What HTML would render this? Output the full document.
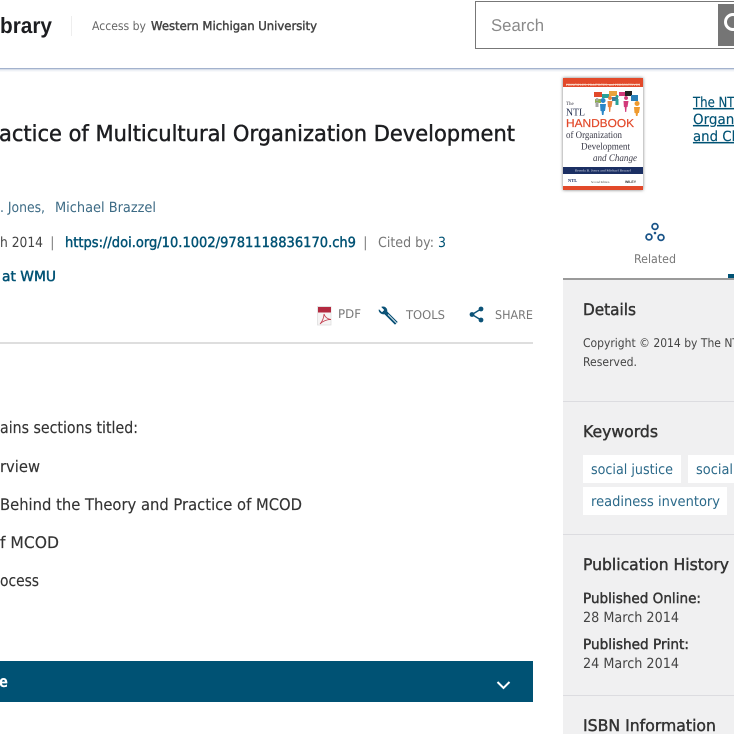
<!DOCTYPE html>
<html><head><meta charset="utf-8"><title>Theory and Practice of Multicultural Organization Development</title>
<style>
html,body{margin:0;padding:0;width:734px;height:734px;overflow:hidden;background:#fff}
svg{display:block}
text{font-family:"DejaVu Sans","Liberation Sans",sans-serif;text-rendering:geometricPrecision;white-space:pre}
.s{stroke-width:.45px}
.r{stroke-width:.15px}
</style></head><body>
<svg width="734" height="734" viewBox="0 0 734 734" xmlns="http://www.w3.org/2000/svg">
<defs><filter id="b" x="-20%" y="-20%" width="140%" height="140%"><feGaussianBlur stdDeviation="1.5"/></filter></defs>

<!-- header -->
<text x="0" y="33" font-size="22" font-weight="700" fill="#1c1d20" textLength="52" lengthAdjust="spacingAndGlyphs" style="font-family:'Liberation Sans',sans-serif">brary</text>
<rect x="71" y="16" width="1" height="20" fill="#eeeeee"/>
<text x="92" y="30" font-size="12" fill="#666" textLength="54" lengthAdjust="spacingAndGlyphs">Access by</text>
<text x="151" y="30" font-size="12" fill="#444" class="s" stroke="#444" textLength="166" lengthAdjust="spacingAndGlyphs">Western Michigan University</text>
<rect x="0" y="68" width="734" height="1.4" fill="#a3b2cd"/>
<rect x="0" y="69.4" width="734" height="2" fill="#eef1f6"/>

<!-- search -->
<rect x="475.5" y="1.5" width="270" height="47" fill="#fff" stroke="#777"/>
<text x="491" y="31" font-size="17" fill="#8a8a8a" textLength="53" lengthAdjust="spacingAndGlyphs" style="font-family:'Liberation Sans',sans-serif">Search</text>
<rect x="718" y="4" width="16" height="42" fill="#757575"/>
<circle cx="733" cy="22" r="7.500" fill="none" stroke="#fff" stroke-width="3"/>

<!-- title -->
<text x="-1" y="141" font-size="22" fill="#1c1d20" class="s" stroke="#1c1d20" textLength="516" lengthAdjust="spacingAndGlyphs">actice of Multicultural Organization Development</text>

<!-- meta -->
<text x="0" y="212" font-size="14" fill="#3d6b85" textLength="45" lengthAdjust="spacingAndGlyphs">. Jones,</text>
<text x="55" y="212" font-size="14" fill="#3d6b85" textLength="101" lengthAdjust="spacingAndGlyphs">Michael Brazzel</text>
<text x="0" y="247" font-size="14" fill="#444" textLength="43" lengthAdjust="spacingAndGlyphs">h 2014</text>
<text x="50" y="247" font-size="14" fill="#888">|</text>
<text x="65" y="247" font-size="14" fill="#005274" class="s" stroke="#005274" textLength="291" lengthAdjust="spacingAndGlyphs">https://doi.org/10.1002/9781118836170.ch9</text>
<text x="363" y="247" font-size="14" fill="#888">|</text>
<text x="378" y="247" font-size="14" fill="#777" textLength="56" lengthAdjust="spacingAndGlyphs">Cited by:</text>
<text x="438" y="247" font-size="14" fill="#005274" textLength="8" lengthAdjust="spacingAndGlyphs">3</text>
<text x="2" y="281" font-size="14" fill="#005274" class="s" stroke="#005274" textLength="54" lengthAdjust="spacingAndGlyphs">at WMU</text>

<!-- tools -->
<g>
<path d="M317.500 306.500h13.500v18.500h-13.500z" fill="#f6f4f4" stroke="#dcdcdc" stroke-width=".7"/>
<rect x="318" y="307" width="13" height="5.500" fill="#b32a40"/>
<path d="M320 324c2.500-2.500 4-7 4-10 1 3 3 5 7 5.500-4 0-8 1.500-11 4.500z" fill="none" stroke="#c0394a" stroke-width=".8"/>
<text x="338" y="318" font-size="12" fill="#777" textLength="23" lengthAdjust="spacingAndGlyphs">PDF</text>
<path d="M379 309.500l3 3 2.500-2.500-3-3c3-1 6 1 5.500 4.500l10.500 10.500-2.500 2.500-10.500-10.500c-3.500.5-6-2-5.500-4.500z" fill="#0c5378" stroke="#0c5378" stroke-width=".5"/>
<path d="M388 314.500l8.500 8.500" stroke="#e8eef2" stroke-width=".9"/>
<text x="406" y="319" font-size="12" fill="#777" textLength="39" lengthAdjust="spacingAndGlyphs">TOOLS</text>
<path d="M481 309l-9 5.500 9 5.500" fill="none" stroke="#0c5378" stroke-width="1.400"/>
<circle cx="481" cy="309" r="2.400" fill="#0c5378"/><circle cx="472" cy="314.500" r="2.400" fill="#0c5378"/><circle cx="481" cy="320" r="2.400" fill="#0c5378"/>
<text x="495" y="319" font-size="12" fill="#777" textLength="38" lengthAdjust="spacingAndGlyphs">SHARE</text>
</g>
<rect x="0" y="342" width="533" height="2" fill="#dedede"/>

<!-- abstract -->
<g font-size="16" fill="#333" class="r" stroke="#333">
<text x="0" y="433" textLength="138" lengthAdjust="spacingAndGlyphs">ains sections titled:</text>
<text x="0" y="472" textLength="40" lengthAdjust="spacingAndGlyphs">rview</text>
<text x="0" y="510" textLength="302" lengthAdjust="spacingAndGlyphs">Behind the Theory and Practice of MCOD</text>
<text x="0" y="548" textLength="59" lengthAdjust="spacingAndGlyphs">f MCOD</text>
<text x="0" y="586" textLength="39" lengthAdjust="spacingAndGlyphs">ocess</text>
</g>
<rect x="0" y="661" width="533" height="41" fill="#005274"/>
<text x="-1" y="687" font-size="16" font-weight="700" fill="#fff" textLength="9" lengthAdjust="spacingAndGlyphs">e</text>
<path d="M497.500 682l6 6 6-6" fill="none" stroke="#fff" stroke-width="2"/>

<!-- cover -->
<rect x="563" y="78" width="80" height="112" fill="#777" filter="url(#b)"/>
<rect x="563" y="78" width="80" height="112" fill="#fff"/>
<rect x="563" y="78" width="80" height="9" fill="#e2492a"/>
<rect x="566" y="84" width="74" height="1" fill="#f7c9b5"/>
<text x="566" y="86" font-size="3.500" fill="#fde8dc" textLength="74" lengthAdjust="spacingAndGlyphs" style="font-family:'Liberation Serif',serif">PRINCIPLES, PRACTICES, and PERSPECTIVES</text>
<g>
<rect x="594" y="92" width="8" height="5" fill="#e2492a"/><rect x="602" y="94" width="7" height="4" fill="#2aa198"/><rect x="609" y="91" width="8" height="5" fill="#e8a33d"/><rect x="619" y="92" width="6" height="4" fill="#d23a7a"/><rect x="625" y="91" width="7" height="5" fill="#222"/><rect x="631" y="95" width="7" height="6" fill="#2a7fb8"/><rect x="595" y="99" width="6" height="4" fill="#8bb04a"/><rect x="612" y="97" width="6" height="4" fill="#3a7a9a"/>
<path d="M603 103a2.500 2.500 0 1 1 .1 0zm-3 1h6l-1 7h-1l-.5 4h-1.500l-.5-4h-1z" fill="#2a87c8"/>
<path d="M610 100a2 2 0 1 1 .1 0zm-2.500 1h5l-1 6h-.8l-.5 5h-1l-.5-5h-.8z" fill="#e8823d"/>
<path d="M626 100a2 2 0 1 1 .1 0zm-2.500 1h5l-1 6h-.8l-.5 5h-1l-.5-5h-.8z" fill="#d23a7a"/>
<path d="M637 106a2.500 2.500 0 1 1 .1 0zm-3 1h6l-1 6h-1l-.5 3h-1.500l-.5-3h-1z" fill="#ef9a2e"/>
<path d="M597 101a1.500 1.500 0 1 1 .1 0zm-1.500 1h3v5h-3z" fill="#a5a5a5"/>
<path d="M617 98a1.500 1.500 0 1 1 .1 0zm-1.500 1h3v6h-3z" fill="#2aa198"/>
</g>
<g fill="#3a3a48">
<text x="566" y="105" font-size="5" style="font-family:'Liberation Serif',serif">The</text>
<text x="566" y="115.500" font-size="10.500" style="font-family:'Liberation Serif',serif" textLength="19" lengthAdjust="spacingAndGlyphs" fill="#1f2a4a">NTL</text>
<text x="566" y="127" font-size="11.500" fill="#e2492a" stroke="#e2492a" stroke-width=".2" textLength="68" lengthAdjust="spacingAndGlyphs" style="font-family:'Liberation Sans',sans-serif">HANDBOOK</text>
<text x="566" y="138" font-size="10" style="font-family:'Liberation Serif',serif" textLength="56" lengthAdjust="spacingAndGlyphs">of Organization</text>
<text x="581" y="149.500" font-size="10" style="font-family:'Liberation Serif',serif" textLength="49" lengthAdjust="spacingAndGlyphs">Development</text>
<text x="593" y="161" font-size="10" font-style="italic" style="font-family:'Liberation Serif',serif" textLength="44" lengthAdjust="spacingAndGlyphs">and Change</text>
</g>
<rect x="563" y="167" width="80" height="7" fill="#1b2f63"/>
<text x="575" y="171.500" font-size="3" fill="#dfe3ee" textLength="56" lengthAdjust="spacingAndGlyphs" style="font-family:'Liberation Serif',serif">Brenda B. Jones and Michael Brazzel</text>
<text x="568" y="182" font-size="4.500" font-weight="700" fill="#1b2f63" style="font-family:'Liberation Serif',serif">NTL</text>
<text x="591" y="183" font-size="3" fill="#444" style="font-family:'Liberation Serif',serif">Second Edition</text>
<text x="625" y="183" font-size="3.500" font-weight="700" fill="#333" style="font-family:'Liberation Sans',sans-serif">WILEY</text>
<rect x="563" y="186" width="80" height="4" fill="#e2492a"/>

<!-- book link -->
<g font-size="14" fill="#005274" text-decoration="underline" class="r" stroke="#005274">
<text x="693" y="107" textLength="48" lengthAdjust="spacingAndGlyphs">The NTL</text>
<text x="693" y="124" textLength="45" lengthAdjust="spacingAndGlyphs">Organi</text>
<text x="693" y="141" textLength="47" lengthAdjust="spacingAndGlyphs">and Ch</text>
</g>

<!-- related tab -->
<circle cx="655" cy="226.500" r="2.900" fill="none" stroke="#1a5488" stroke-width="1.800"/>
<circle cx="649" cy="237" r="2.900" fill="none" stroke="#1a5488" stroke-width="1.800"/>
<circle cx="661" cy="237.500" r="2.900" fill="none" stroke="#1a5488" stroke-width="1.800"/>
<circle cx="655" cy="233" r="1.300" fill="#1a5488"/>
<text x="634" y="263" font-size="12" fill="#777" textLength="42" lengthAdjust="spacingAndGlyphs">Related</text>

<!-- panel -->
<rect x="563" y="279" width="171" height="455" fill="#f0f0f1"/>
<rect x="563" y="278" width="171" height="2" fill="#9a9a9a"/>
<rect x="728" y="274" width="6" height="4" fill="#005274"/>

<text x="583" y="315" font-size="16" fill="#333" class="s" stroke="#333" textLength="53" lengthAdjust="spacingAndGlyphs">Details</text>
<text x="583" y="347" font-size="12" fill="#444" textLength="162" lengthAdjust="spacingAndGlyphs">Copyright © 2014 by The NTL</text>
<text x="583" y="366" font-size="12" fill="#444" textLength="54" lengthAdjust="spacingAndGlyphs">Reserved.</text>
<rect x="563" y="401" width="171" height="1" fill="#dcdce0"/>

<text x="583" y="437" font-size="16" fill="#333" class="s" stroke="#333" textLength="75" lengthAdjust="spacingAndGlyphs">Keywords</text>
<rect x="583" y="455" width="98" height="28" fill="#fff"/>
<rect x="688" y="455" width="60" height="28" fill="#fff"/>
<rect x="583" y="487" width="144" height="28" fill="#fff"/>
<text x="591" y="474" font-size="14" fill="#2c6a8a" textLength="82" lengthAdjust="spacingAndGlyphs">social justice</text>
<text x="696" y="474" font-size="14" fill="#2c6a8a" textLength="37" lengthAdjust="spacingAndGlyphs">social</text>
<text x="591" y="506" font-size="14" fill="#2c6a8a" textLength="129" lengthAdjust="spacingAndGlyphs">readiness inventory</text>
<rect x="563" y="534" width="171" height="1" fill="#dcdce0"/>

<text x="583" y="570" font-size="16" fill="#333" class="s" stroke="#333" textLength="146" lengthAdjust="spacingAndGlyphs">Publication History</text>
<text x="583" y="603" font-size="14" fill="#333" class="s" stroke="#333" textLength="118" lengthAdjust="spacingAndGlyphs">Published Online:</text>
<text x="583" y="622" font-size="14" fill="#444" textLength="96" lengthAdjust="spacingAndGlyphs">28 March 2014</text>
<text x="583" y="649" font-size="14" fill="#333" class="s" stroke="#333" textLength="106" lengthAdjust="spacingAndGlyphs">Published Print:</text>
<text x="583" y="668" font-size="14" fill="#444" textLength="96" lengthAdjust="spacingAndGlyphs">24 March 2014</text>
<rect x="563" y="695" width="171" height="1" fill="#dcdce0"/>
<text x="583" y="731" font-size="16" fill="#333" class="s" stroke="#333" textLength="133" lengthAdjust="spacingAndGlyphs">ISBN Information</text>
</svg>
</body></html>
